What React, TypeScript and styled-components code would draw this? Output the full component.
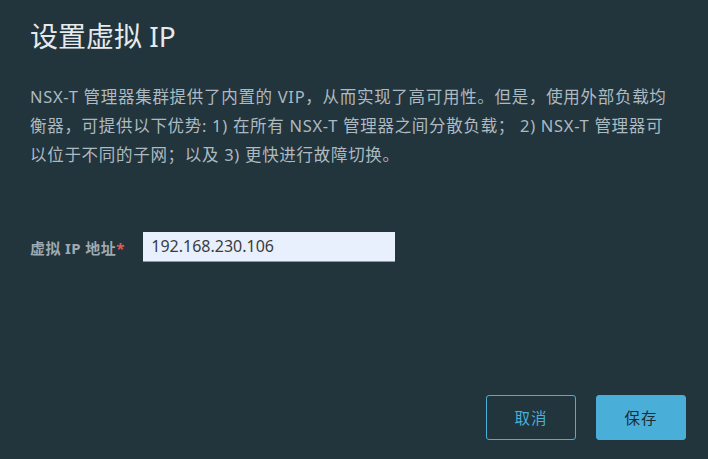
import styled, { createGlobalStyle } from "styled-components";

const GlobalStyle = createGlobalStyle`
  html, body {
    margin: 0;
    padding: 0;
    background: #22343c;
  }
  * {
    box-sizing: border-box;
  }
`;

const FONT = `"Noto Sans", "Noto Sans CJK SC", sans-serif`;

const Modal = styled.div`
  width: 708px;
  height: 459px;
  background: #22343c;
  display: flex;
  flex-direction: column;
  padding: 18px 22px 19px 30px;
  font-family: ${FONT};
`;

const Title = styled.h3`
  margin: 0;
  font-size: 28px;
  line-height: 36px;
  font-weight: 400;
  color: #e6eaec;
`;

const Description = styled.p`
  margin: 28px 0 0;
  font-size: 16.5px;
  line-height: 29px;
  letter-spacing: 0.7px;
  color: #adbac2;
  white-space: nowrap;
`;

const FormRow = styled.div`
  display: flex;
  align-items: center;
  margin-top: 63px;
  gap: 19px;
`;

const Label = styled.label`
  font-size: 15px;
  font-weight: 700;
  letter-spacing: 0.4px;
  color: #9ea9b0;
  white-space: nowrap;
`;

const Required = styled.span`
  color: #e05a52;
  letter-spacing: 0;
`;

const Input = styled.input`
  width: 252px;
  height: 30px;
  border: none;
  border-bottom: 1px solid #8d9aa2;
  background: #e8f0fe;
  padding: 0 8px 1px;
  font-family: ${FONT};
  font-size: 16px;
  color: #3a3d40;
  outline: none;
`;

const Footer = styled.div`
  margin-top: auto;
  display: flex;
  justify-content: flex-end;
  gap: 20px;
`;

const Button = styled.button<{ $primary?: boolean }>`
  width: 90px;
  height: 45px;
  border-radius: 3px;
  border: 1px solid #49afd9;
  background: ${(p) => (p.$primary ? "#49afd9" : "transparent")};
  color: ${(p) => (p.$primary ? "#1c2c34" : "#49afd9")};
  font-family: ${FONT};
  font-size: 15.5px;
  letter-spacing: 1px;
  cursor: pointer;
`;

export default function App() {
  return (
    <>
      <GlobalStyle />
      <Modal>
        <Title>设置虚拟 IP</Title>
        <Description>
          NSX-T 管理器集群提供了内置的 VIP，从而实现了高可用性。但是，使用外部负载均
          <br />
          衡器，可提供以下优势: 1) 在所有 NSX-T 管理器之间分散负载； 2) NSX-T 管理器可
          <br />
          以位于不同的子网；以及 3) 更快进行故障切换。
        </Description>
        <FormRow>
          <Label>
            虚拟 IP 地址<Required>*</Required>
          </Label>
          <Input defaultValue="192.168.230.106" />
        </FormRow>
        <Footer>
          <Button>取消</Button>
          <Button $primary>保存</Button>
        </Footer>
      </Modal>
    </>
  );
}
